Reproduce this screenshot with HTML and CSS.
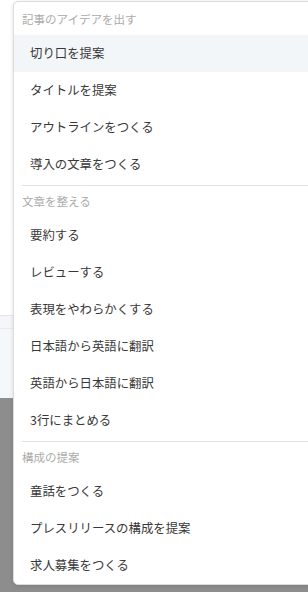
FILE: index.html
```html
<!DOCTYPE html>
<html lang="ja">
<head>
<meta charset="utf-8">
<link rel="stylesheet" href="styles.css">
</head>
<body>
<div class="backdrop">
  <div class="bd-white"></div>
  <div class="bd-band"></div>
  <div class="bd-light"></div>
  <div class="bd-gray"></div>
</div>
<div class="menu">
  <div class="group first">
    <div class="group-title">記事のアイデアを出す</div>
    <div class="item active">切り口を提案</div>
    <div class="item">タイトルを提案</div>
    <div class="item">アウトラインをつくる</div>
    <div class="item">導入の文章をつくる</div>
  </div>
  <div class="divider"></div>
  <div class="group">
    <div class="group-title">文章を整える</div>
    <div class="item">要約する</div>
    <div class="item">レビューする</div>
    <div class="item">表現をやわらかくする</div>
    <div class="item">日本語から英語に翻訳</div>
    <div class="item">英語から日本語に翻訳</div>
    <div class="item">3行にまとめる</div>
  </div>
  <div class="divider"></div>
  <div class="group">
    <div class="group-title">構成の提案</div>
    <div class="item">童話をつくる</div>
    <div class="item">プレスリリースの構成を提案</div>
    <div class="item">求人募集をつくる</div>
  </div>
</div>
</body>
</html>
```

FILE: styles.css
```css
html, body {
  margin: 0;
  padding: 0;
}
body {
  width: 308px;
  height: 592px;
  overflow: hidden;
  position: relative;
  font-family: "Noto Sans CJK JP", "Noto Sans", sans-serif;
  background: #8d8d8d;
}
.backdrop {
  display: flex;
  flex-direction: column;
  height: 592px;
}
.bd-white {
  height: 315px;
  background: #ffffff;
}
.bd-band {
  height: 14px;
  background: #f4f6f9;
  border-top: 1px solid #e4e6e9;
  border-bottom: 1px solid #e8ebee;
  box-sizing: border-box;
}
.bd-light {
  height: 69px;
  background: #f5f8fb;
}
.bd-gray {
  flex: 1;
  background: #8d8d8d;
}
.menu {
  position: absolute;
  left: 13px;
  top: 1px;
  width: 310px;
  background: #ffffff;
  border: 1px solid #dcdcdc;
  border-radius: 5px;
  box-shadow: 0 1px 4px rgba(0, 0, 0, 0.12);
  padding-top: 2px;
  box-sizing: border-box;
}
.group-title {
  height: 31px;
  line-height: 31px;
  padding-left: 8px;
  font-size: 11.5px;
  color: #ababab;
}
.item {
  height: 37px;
  line-height: 37px;
  padding-left: 16px;
  font-size: 12.4px;
  color: #383838;
  white-space: nowrap;
}
.item.active {
  background: #f3f6f9;
}
.divider {
  height: 1px;
  margin: 2px 0 0 8px;
  background: #e2e2e2;
}
```
